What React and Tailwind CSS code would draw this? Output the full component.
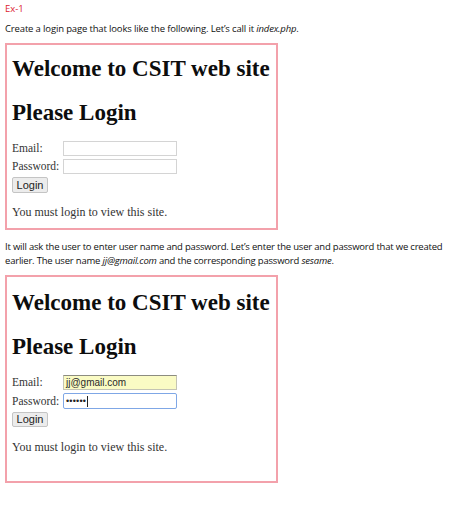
import React from "react";

const serif = { fontFamily: '"Liberation Serif", "Times New Roman", serif' };
const sans = { fontFamily: '"Liberation Sans", Arial, sans-serif' };

const LoginBox = ({ filled }) => (
  <div
    className={`w-[273px] border-2 border-[#f3a1ab] pl-[5px] ${filled ? "pt-[12px] pb-[26px]" : "pt-[10px] pb-[8px]"}`}
    style={serif}
  >
    <h1 className="text-[23px] font-bold leading-[28px] text-[#0d0d0d]">Welcome to CSIT web site</h1>
    <h2 className="mt-[16px] text-[23px] font-bold leading-[28px] text-[#0d0d0d]">Please Login</h2>
    <div className="mt-[14px] flex flex-col gap-[3px] text-[11.5px] leading-[15px] text-[#333]">
      <div className="flex h-[15px] items-center">
        <span className="w-[51px]">Email:</span>
        {filled ? (
          <div
            className="flex h-[15px] w-[114px] items-center border border-[#c4c4b4] border-t-[#8c8c80] bg-[#fafbc4] pl-[2px] text-[10px] leading-none text-[#2a2a2a]"
            style={sans}
          >
            jj@gmail.com
          </div>
        ) : (
          <div className="h-[15px] w-[114px] border border-[#d4d4d4] bg-white" />
        )}
      </div>
      <div className={`flex items-center ${filled ? "h-[16px]" : "h-[15px]"}`}>
        <span className="w-[51px]">Password:</span>
        {filled ? (
          <div
            className="flex h-[16px] w-[114px] items-center rounded-[2px] border border-[#7fa7e6] bg-white pl-[2px] text-[9px] leading-none text-[#222]"
            style={sans}
          >
            <span className="tracking-[0.2px]">••••••</span>
            <span className="ml-[1px] h-[11px] w-px bg-[#222]" />
          </div>
        ) : (
          <div className="h-[15px] w-[114px] border border-[#d4d4d4] bg-white" />
        )}
      </div>
      <div>
        <button
          className={`w-[36px] rounded-[2px] border border-[#c4c4c4] bg-[#ececec] text-[11px] leading-none text-[#222] ${filled ? "h-[15px]" : "h-[16px]"}`}
          style={sans}
        >
          Login
        </button>
      </div>
    </div>
    <p className={`${filled ? "mt-[12px]" : "mt-[11px]"} text-[12px] leading-[16px] text-[#333]`}>
      You must login to view this site.
    </p>
  </div>
);

export default function App() {
  return (
    <div
      className="h-[532px] w-[474px] bg-white px-[5px] pt-[2px] text-[9.5px] text-[#111]"
      style={{ fontFamily: '"Open Sans", "Noto Sans", sans-serif' }}
    >
      <p className="leading-[13px] text-[#dc2330]">Ex-1</p>
      <p className="mt-[7px] leading-[13px] tracking-[-0.15px]">
        Create a login page that looks like the following. Let’s call it <i>index.php</i>.
      </p>
      <div className="mt-[8px]">
        <LoginBox />
      </div>
      <p className="mt-[10px] leading-[14px] tracking-[-0.2px]">
        It will ask the user to enter user name and password. Let’s enter the user and password that we created
        <br />
        earlier. The user name <i>jj@gmail.com</i> and the corresponding password <i>sesame</i>.
      </p>
      <div className="mt-[7px]">
        <LoginBox filled />
      </div>
    </div>
  );
}
